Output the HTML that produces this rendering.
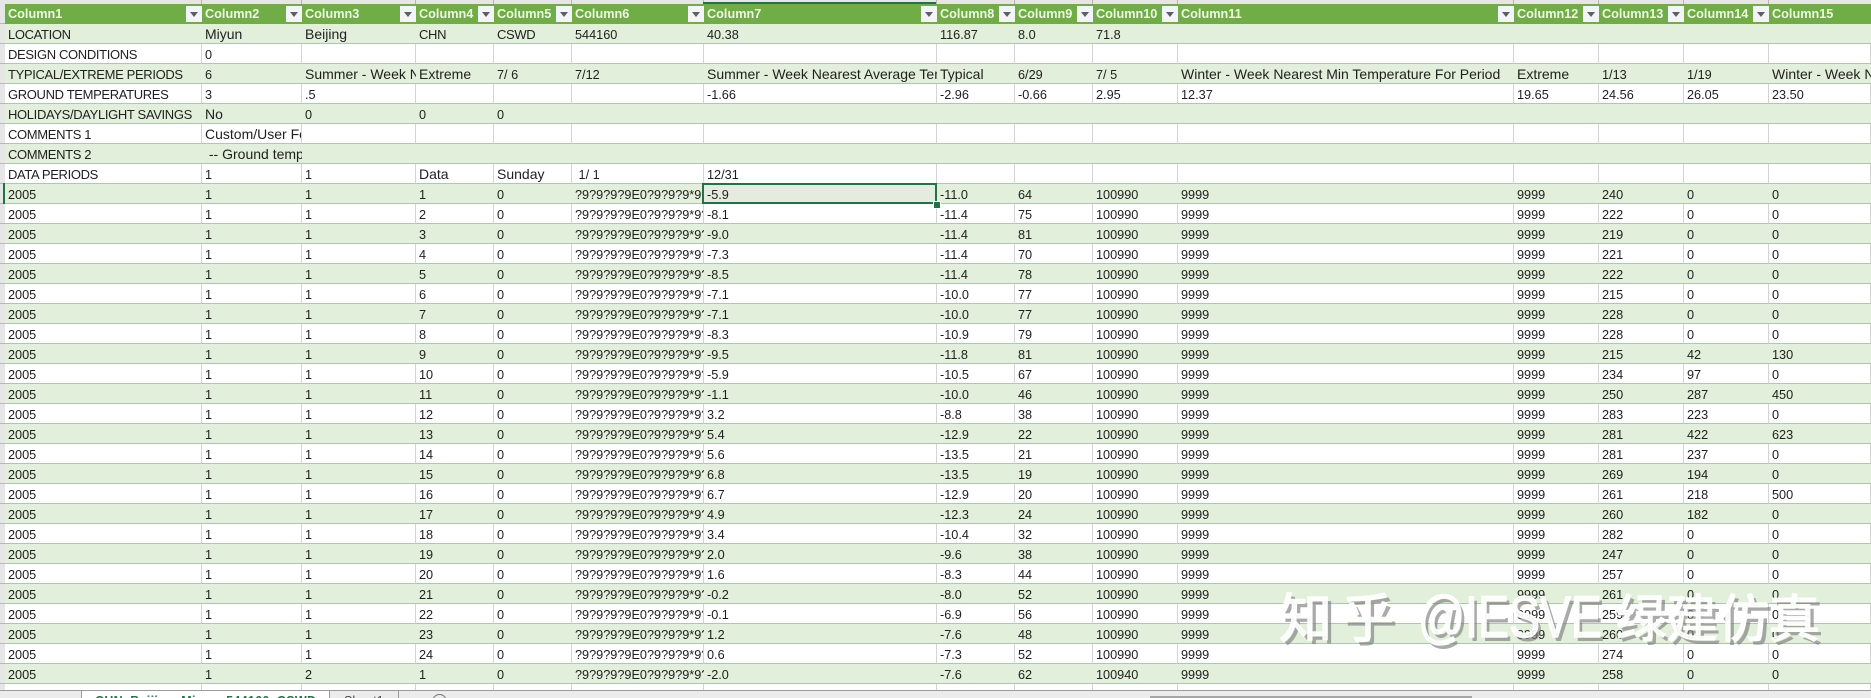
<!DOCTYPE html>
<html><head><meta charset="utf-8"><title>Sheet</title>
<style>
html,body{margin:0;padding:0;background:#fff}
body{width:1871px;height:698px;overflow:hidden;position:relative;font-family:"Liberation Sans",sans-serif}
#top{position:absolute;left:0;top:0;width:1871px;height:4px;background:#e6e6e6}
#top i{position:absolute;top:0;width:1px;height:4px;background:#b4b4b4}
#colsel{position:absolute;left:703px;top:2px;width:233px;height:2px;background:#217346}
#gut{position:absolute;left:0;top:4px;width:5px;height:686px;background:repeating-linear-gradient(to bottom,#e6e6e6 0,#e6e6e6 19px,#b8b8b8 19px,#b8b8b8 20px)}
#rowsel{position:absolute;left:3px;top:183px;width:2px;height:21px;background:#217346}
#wrap{position:absolute;left:5px;top:4px;width:1866px;height:686px;overflow:hidden}
table{border-collapse:separate;border-spacing:0;table-layout:fixed;width:1866px}
td,th{box-sizing:border-box;height:20px;padding:3px 0 0 3px;white-space:pre;overflow:hidden;font-size:12.7px;font-weight:normal;text-align:left;color:#1f1f1f;border-bottom:1px solid #a9d08e;line-height:16px}
td.a{font-size:13px;letter-spacing:-.35px}
td.b{font-size:14px;padding-top:2px;line-height:17px}
th{background:#70ad47;color:#eef7e2;font-weight:bold;height:20px;border-bottom:none;position:relative;padding-top:1px;line-height:19px}
th b{position:absolute;right:0;top:2px;width:16px;height:16px;background:#f3f4f9}
th b:after{content:"";position:absolute;left:4px;top:6px;border:4px solid transparent;border-top:5px solid #5f5f5f;border-bottom:0}
tr:nth-child(even) td{background:#e2efda}
tr:nth-child(odd) td{background:#fff;border-right:1px solid #d4d4d4}
tr:nth-child(even) td.s{background:#e6ebe0}
#sel{position:absolute;left:702px;top:183px;width:235px;height:21px;box-sizing:border-box;border:2px solid #217346}
#hd{position:absolute;left:933px;top:201px;width:6px;height:6px;background:#217346;border:1px solid #fff;box-sizing:content-box}
#tabs{position:absolute;left:0;top:690px;width:1871px;height:8px;background:#ececec;border-top:1px solid #9a9a9a;box-sizing:border-box;overflow:hidden}
#act{position:absolute;left:81px;top:0;width:249px;height:8px;background:#fff;border-left:1px solid #9a9a9a;border-right:1px solid #9a9a9a;box-sizing:border-box;margin-top:-1px}
.t{position:absolute;top:3px;font-size:12.5px;line-height:14px;white-space:pre}
#act .t{left:13px;color:#217346;font-weight:bold;letter-spacing:.3px;top:4px}
#circ{position:absolute;left:432px;top:3px;width:15px;height:15px;border:1px solid #777;border-radius:50%;box-sizing:border-box}
#thumb{position:absolute;left:1150px;top:5px;width:322px;height:3px;background:#a6a6a6}
#sep{position:absolute;left:398px;top:0;width:1px;height:8px;background:#9a9a9a}
#wm{position:absolute;left:1279px;top:580px;font-family:"Liberation Sans","Noto Sans CJK SC",sans-serif;font-size:54px;line-height:76px;color:rgba(255,255,255,.9);-webkit-text-stroke:1.5px rgba(255,255,255,.9);text-shadow:4px 4px 0 rgba(125,125,125,.65);white-space:pre}
#wm .k{font-size:53px;letter-spacing:9px}
#wm .l{display:inline-block;font-size:58px;transform:scaleX(.8);transform-origin:0 50%;margin-right:-32px}
#wm .c{font-size:51px}
</style></head><body>
<div id="top"><i style="left:201px"></i><i style="left:301px"></i><i style="left:415px"></i><i style="left:493px"></i><i style="left:571px"></i><i style="left:703px"></i><i style="left:936px"></i><i style="left:1014px"></i><i style="left:1092px"></i><i style="left:1177px"></i><i style="left:1513px"></i><i style="left:1598px"></i><i style="left:1683px"></i><i style="left:1768px"></i></div>
<div id="colsel"></div>
<div id="gut"></div><div id="rowsel"></div>
<div id="wrap"><table>
<colgroup><col style="width:197px"><col style="width:100px"><col style="width:114px"><col style="width:78px"><col style="width:78px"><col style="width:132px"><col style="width:233px"><col style="width:78px"><col style="width:78px"><col style="width:85px"><col style="width:336px"><col style="width:85px"><col style="width:85px"><col style="width:85px"><col style="width:102px"></colgroup>
<tr><th>Column1<b></b></th><th>Column2<b></b></th><th>Column3<b></b></th><th>Column4<b></b></th><th>Column5<b></b></th><th>Column6<b></b></th><th>Column7<b></b></th><th>Column8<b></b></th><th>Column9<b></b></th><th>Column10<b></b></th><th>Column11<b></b></th><th>Column12<b></b></th><th>Column13<b></b></th><th>Column14<b></b></th><th>Column15</th></tr>
<tr><td class="a">LOCATION<td class="b">Miyun<td class="b">Beijing<td class="a">CHN<td class="a">CSWD<td>544160<td>40.38<td>116.87<td>8.0<td>71.8<td><td><td><td><td></tr>
<tr><td class="a">DESIGN CONDITIONS<td>0<td><td><td><td><td><td><td><td><td><td><td><td><td></tr>
<tr><td class="a">TYPICAL/EXTREME PERIODS<td>6<td class="b">Summer - Week Nearest<td class="b">Extreme<td>7/ 6<td>7/12<td class="b">Summer - Week Nearest Average Temperature<td class="b">Typical<td>6/29<td>7/ 5<td class="b">Winter - Week Nearest Min Temperature For Period<td class="b">Extreme<td>1/13<td>1/19<td class="b">Winter - Week Nearest</tr>
<tr><td class="a">GROUND TEMPERATURES<td>3<td>.5<td><td><td><td>-1.66<td>-2.96<td>-0.66<td>2.95<td>12.37<td>19.65<td>24.56<td>26.05<td>23.50</tr>
<tr><td class="a">HOLIDAYS/DAYLIGHT SAVINGS<td class="b">No<td>0<td>0<td>0<td><td><td><td><td><td><td><td><td><td></tr>
<tr><td class="a">COMMENTS 1<td class="b">Custom/User Format<td><td><td><td><td><td><td><td><td><td><td><td><td></tr>
<tr><td class="a">COMMENTS 2<td class="b"> -- Ground temperatures<td><td><td><td><td><td><td><td><td><td><td><td><td></tr>
<tr><td class="a">DATA PERIODS<td>1<td>1<td class="b">Data<td class="b">Sunday<td> 1/ 1<td>12/31<td><td><td><td><td><td><td><td></tr>
<tr><td>2005<td>1<td>1<td>1<td>0<td>?9?9?9?9E0?9?9?9*9?9?9<td class="s">-5.9<td>-11.0<td>64<td>100990<td>9999<td>9999<td>240<td>0<td>0</tr>
<tr><td>2005<td>1<td>1<td>2<td>0<td>?9?9?9?9E0?9?9?9*9?9?9<td>-8.1<td>-11.4<td>75<td>100990<td>9999<td>9999<td>222<td>0<td>0</tr>
<tr><td>2005<td>1<td>1<td>3<td>0<td>?9?9?9?9E0?9?9?9*9?9?9<td>-9.0<td>-11.4<td>81<td>100990<td>9999<td>9999<td>219<td>0<td>0</tr>
<tr><td>2005<td>1<td>1<td>4<td>0<td>?9?9?9?9E0?9?9?9*9?9?9<td>-7.3<td>-11.4<td>70<td>100990<td>9999<td>9999<td>221<td>0<td>0</tr>
<tr><td>2005<td>1<td>1<td>5<td>0<td>?9?9?9?9E0?9?9?9*9?9?9<td>-8.5<td>-11.4<td>78<td>100990<td>9999<td>9999<td>222<td>0<td>0</tr>
<tr><td>2005<td>1<td>1<td>6<td>0<td>?9?9?9?9E0?9?9?9*9?9?9<td>-7.1<td>-10.0<td>77<td>100990<td>9999<td>9999<td>215<td>0<td>0</tr>
<tr><td>2005<td>1<td>1<td>7<td>0<td>?9?9?9?9E0?9?9?9*9?9?9<td>-7.1<td>-10.0<td>77<td>100990<td>9999<td>9999<td>228<td>0<td>0</tr>
<tr><td>2005<td>1<td>1<td>8<td>0<td>?9?9?9?9E0?9?9?9*9?9?9<td>-8.3<td>-10.9<td>79<td>100990<td>9999<td>9999<td>228<td>0<td>0</tr>
<tr><td>2005<td>1<td>1<td>9<td>0<td>?9?9?9?9E0?9?9?9*9?9?9<td>-9.5<td>-11.8<td>81<td>100990<td>9999<td>9999<td>215<td>42<td>130</tr>
<tr><td>2005<td>1<td>1<td>10<td>0<td>?9?9?9?9E0?9?9?9*9?9?9<td>-5.9<td>-10.5<td>67<td>100990<td>9999<td>9999<td>234<td>97<td>0</tr>
<tr><td>2005<td>1<td>1<td>11<td>0<td>?9?9?9?9E0?9?9?9*9?9?9<td>-1.1<td>-10.0<td>46<td>100990<td>9999<td>9999<td>250<td>287<td>450</tr>
<tr><td>2005<td>1<td>1<td>12<td>0<td>?9?9?9?9E0?9?9?9*9?9?9<td>3.2<td>-8.8<td>38<td>100990<td>9999<td>9999<td>283<td>223<td>0</tr>
<tr><td>2005<td>1<td>1<td>13<td>0<td>?9?9?9?9E0?9?9?9*9?9?9<td>5.4<td>-12.9<td>22<td>100990<td>9999<td>9999<td>281<td>422<td>623</tr>
<tr><td>2005<td>1<td>1<td>14<td>0<td>?9?9?9?9E0?9?9?9*9?9?9<td>5.6<td>-13.5<td>21<td>100990<td>9999<td>9999<td>281<td>237<td>0</tr>
<tr><td>2005<td>1<td>1<td>15<td>0<td>?9?9?9?9E0?9?9?9*9?9?9<td>6.8<td>-13.5<td>19<td>100990<td>9999<td>9999<td>269<td>194<td>0</tr>
<tr><td>2005<td>1<td>1<td>16<td>0<td>?9?9?9?9E0?9?9?9*9?9?9<td>6.7<td>-12.9<td>20<td>100990<td>9999<td>9999<td>261<td>218<td>500</tr>
<tr><td>2005<td>1<td>1<td>17<td>0<td>?9?9?9?9E0?9?9?9*9?9?9<td>4.9<td>-12.3<td>24<td>100990<td>9999<td>9999<td>260<td>182<td>0</tr>
<tr><td>2005<td>1<td>1<td>18<td>0<td>?9?9?9?9E0?9?9?9*9?9?9<td>3.4<td>-10.4<td>32<td>100990<td>9999<td>9999<td>282<td>0<td>0</tr>
<tr><td>2005<td>1<td>1<td>19<td>0<td>?9?9?9?9E0?9?9?9*9?9?9<td>2.0<td>-9.6<td>38<td>100990<td>9999<td>9999<td>247<td>0<td>0</tr>
<tr><td>2005<td>1<td>1<td>20<td>0<td>?9?9?9?9E0?9?9?9*9?9?9<td>1.6<td>-8.3<td>44<td>100990<td>9999<td>9999<td>257<td>0<td>0</tr>
<tr><td>2005<td>1<td>1<td>21<td>0<td>?9?9?9?9E0?9?9?9*9?9?9<td>-0.2<td>-8.0<td>52<td>100990<td>9999<td>9999<td>261<td>0<td>0</tr>
<tr><td>2005<td>1<td>1<td>22<td>0<td>?9?9?9?9E0?9?9?9*9?9?9<td>-0.1<td>-6.9<td>56<td>100990<td>9999<td>9999<td>259<td>0<td>0</tr>
<tr><td>2005<td>1<td>1<td>23<td>0<td>?9?9?9?9E0?9?9?9*9?9?9<td>1.2<td>-7.6<td>48<td>100990<td>9999<td>9999<td>260<td>0<td>0</tr>
<tr><td>2005<td>1<td>1<td>24<td>0<td>?9?9?9?9E0?9?9?9*9?9?9<td>0.6<td>-7.3<td>52<td>100990<td>9999<td>9999<td>274<td>0<td>0</tr>
<tr><td>2005<td>1<td>2<td>1<td>0<td>?9?9?9?9E0?9?9?9*9?9?9<td>-2.0<td>-7.6<td>62<td>100940<td>9999<td>9999<td>258<td>0<td>0</tr>
<tr><td><td><td><td><td><td>?9?9?9?9E0?9?9?9*9?9?9<td><td><td><td><td><td><td><td><td></tr>
</table></div>
<div id="sel"></div><div id="hd"></div>
<div id="tabs">
<div id="act"><span class="t">CHN_Beijing_Miyun_544160_CSWD</span></div>
<span class="t" style="left:344px;color:#444">Sheet1</span>
<div id="sep"></div><div id="circ"></div><div id="thumb"></div>
</div>
<div id="wm"><span class="k">知乎</span> <span class="l">@IESVE</span><span class="c">绿建仿真</span></div>
</body></html>
